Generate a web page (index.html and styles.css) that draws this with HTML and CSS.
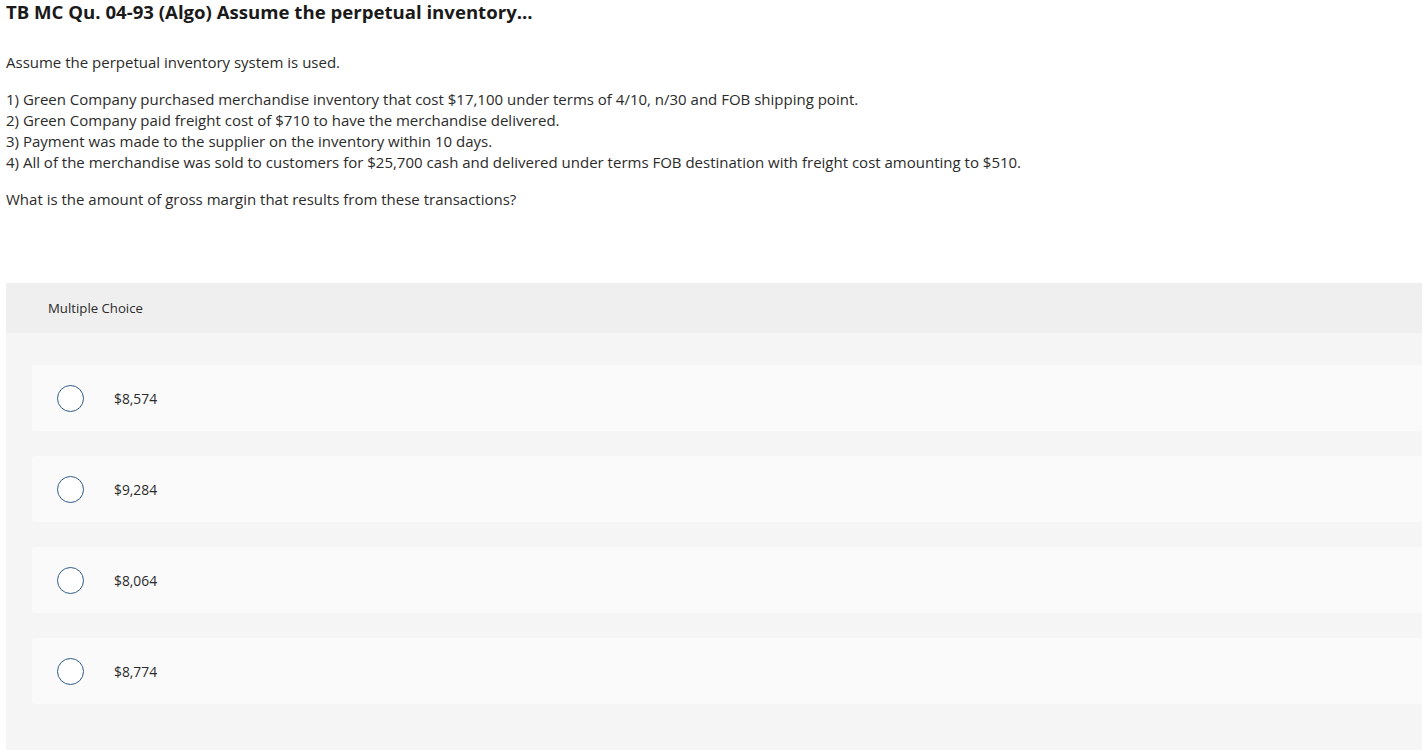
FILE: index.html
```html
<!DOCTYPE html>
<html>
<head>
<meta charset="utf-8">
<link rel="stylesheet" href="styles.css">
</head>
<body>
<div class="page">
  <h1 class="title">TB MC Qu. 04-93 (Algo) Assume the perpetual inventory...</h1>
  <div class="question">
    <p class="intro">Assume the perpetual inventory system is used.</p>
    <p class="steps">1) Green Company purchased merchandise inventory that cost $17,100 under terms of 4/10, n/30 and FOB shipping point.<br>2) Green Company paid freight cost of $710 to have the merchandise delivered.<br>3) Payment was made to the supplier on the inventory within 10 days.<br>4) All of the merchandise was sold to customers for $25,700 cash and delivered under terms FOB destination with freight cost amounting to $510.</p>
    <p class="ask">What is the amount of gross margin that results from these transactions?</p>
  </div>
  <div class="mc">
    <div class="mc-head">Multiple Choice</div>
    <div class="mc-body">
      <div class="option"><span class="radio"></span><span class="label">$8,574</span></div>
      <div class="option"><span class="radio"></span><span class="label">$9,284</span></div>
      <div class="option"><span class="radio"></span><span class="label">$8,064</span></div>
      <div class="option"><span class="radio"></span><span class="label">$8,774</span></div>
    </div>
  </div>
</div>
</body>
</html>
```
FILE: styles.css
```css
html, body {
  margin: 0;
  padding: 0;
  background: #ffffff;
}
body {
  font-family: "Open Sans", "Liberation Sans", sans-serif;
  color: #2b2b2b;
  overflow: hidden;
}
.page {
  padding-left: 6px;
}
.title {
  margin: 0;
  padding-top: 0;
  font-size: 18.6px;
  line-height: 24px;
  font-weight: 700;
  color: #1a1a1a;
}
.question {
  padding-top: 28px;
  font-size: 15px;
  line-height: 21px;
}
.question p {
  margin: 0;
}
.intro {
  margin-bottom: 16px !important;
}
.steps {
  margin-bottom: 16px !important;
}
.mc {
  margin-top: 73px;
  background: #f5f5f5;
  height: 470px;
}
.mc-head {
  height: 50px;
  background: #efefef;
  padding-left: 42px;
  display: flex;
  align-items: center;
  font-size: 13.2px;
  color: #2b2b2b;
}
.mc-body {
  padding: 32px 0 0 26px;
  display: flex;
  flex-direction: column;
  gap: 25px;
}
.option {
  height: 66px;
  background: #fafafa;
  border-radius: 3px 0 0 3px;
  display: flex;
  align-items: center;
}
.radio {
  width: 25px;
  height: 25px;
  border: 1.5px solid #2d5b8a;
  border-radius: 50%;
  margin-left: 25px;
  background: #ffffff;
}
.label {
  margin-left: 30px;
  font-size: 13.8px;
  color: #2b2b2b;
}
```
